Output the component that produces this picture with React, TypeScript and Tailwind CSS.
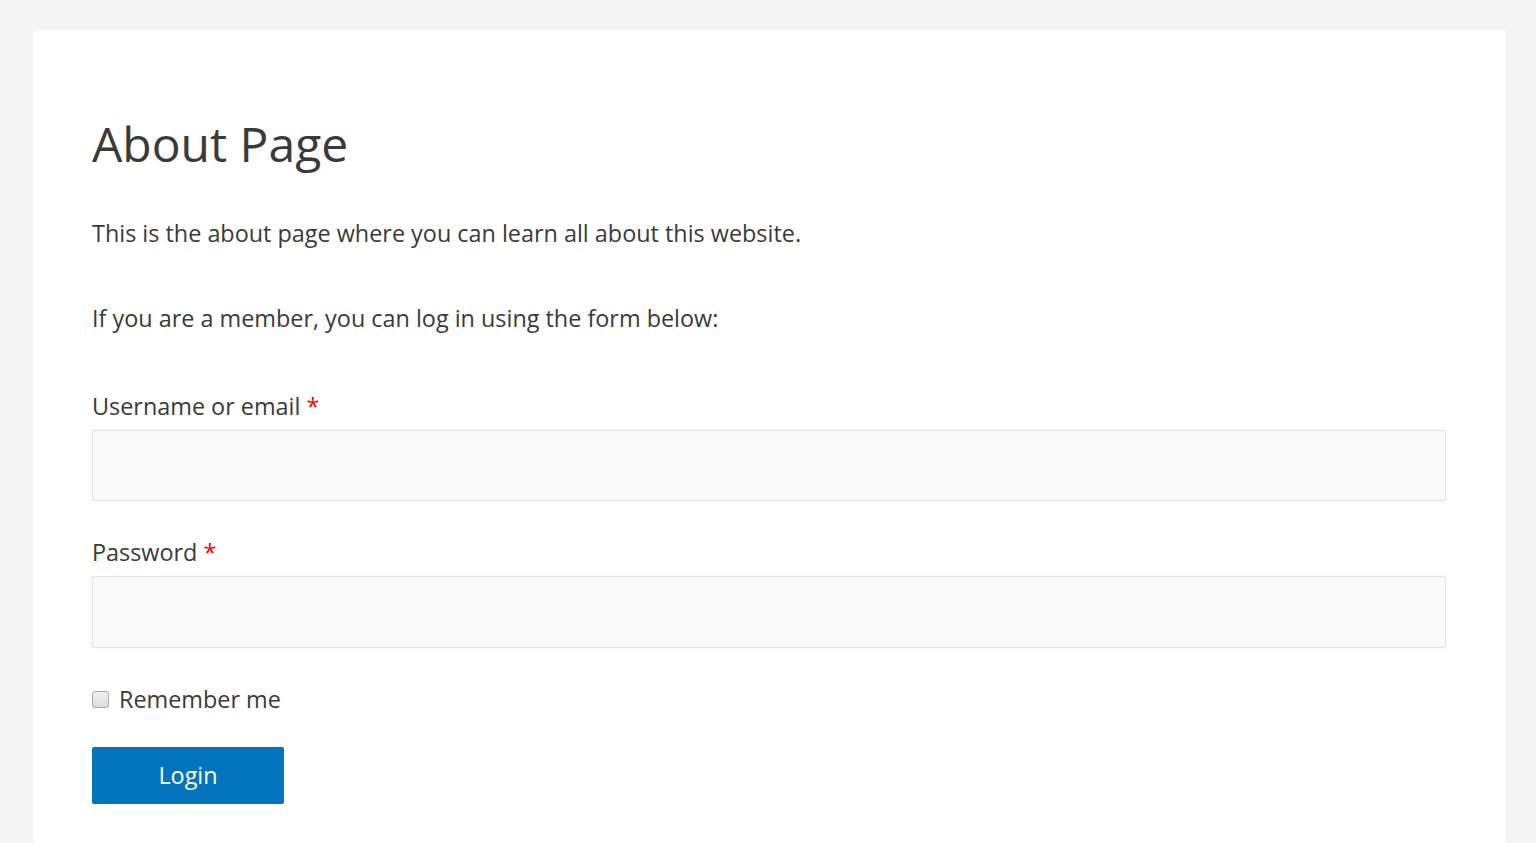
import React from "react";

const font = { fontFamily: '"Open Sans", "Noto Sans", sans-serif' };

export default function App() {
  return (
    <div className="min-h-[843px] bg-[#f4f4f4] pl-[33px] pr-[31px] pt-[31px] text-[#3a3a3a]" style={font}>
      <div className="min-h-[812px] bg-white px-[59px] pt-[89px]">
        <h1 className="text-[48px] leading-[1] font-normal text-[#3a3a3a]">About Page</h1>
        <p className="mt-[47px] text-[23.4px] leading-[36px]">
          This is the about page where you can learn all about this website.
        </p>
        <p className="mt-[49px] text-[23.4px] leading-[36px]">
          If you are a member, you can log in using the form below:
        </p>
        <form className="mt-[52px] flex flex-col" onSubmit={(e) => e.preventDefault()}>
          <label className="text-[23.4px] leading-[36px]">
            Username or email <span className="text-[#ff0000]">*</span>
          </label>
          <input
            type="text"
            className="mt-[6px] h-[71px] w-full rounded-[2px] border border-[#e2e2e2] bg-[#fafafa] shadow-[0_0_2px_rgba(0,0,0,0.06)] outline-none"
          />
          <label className="mt-[33px] text-[23.4px] leading-[36px]">
            Password <span className="text-[#ff0000]">*</span>
          </label>
          <input
            type="password"
            className="mt-[6px] h-[72px] w-full rounded-[2px] border border-[#e2e2e2] bg-[#fafafa] shadow-[0_0_2px_rgba(0,0,0,0.06)] outline-none"
          />
          <label className="mt-[33px] flex items-center gap-[10px] text-[23.4px] leading-[36px]">
            <span className="h-[17px] w-[17px] rounded-[3px] border border-[#a8a8a8] bg-gradient-to-b from-[#f0f0f0] to-[#dcdcdc]" />
            Remember me
          </label>
          <div className="mt-[30px]">
            <button
              type="submit"
              className="h-[57px] w-[192px] rounded-[2px] bg-[#0274be] text-[23.4px] text-white"
            >
              Login
            </button>
          </div>
        </form>
      </div>
    </div>
  );
}
